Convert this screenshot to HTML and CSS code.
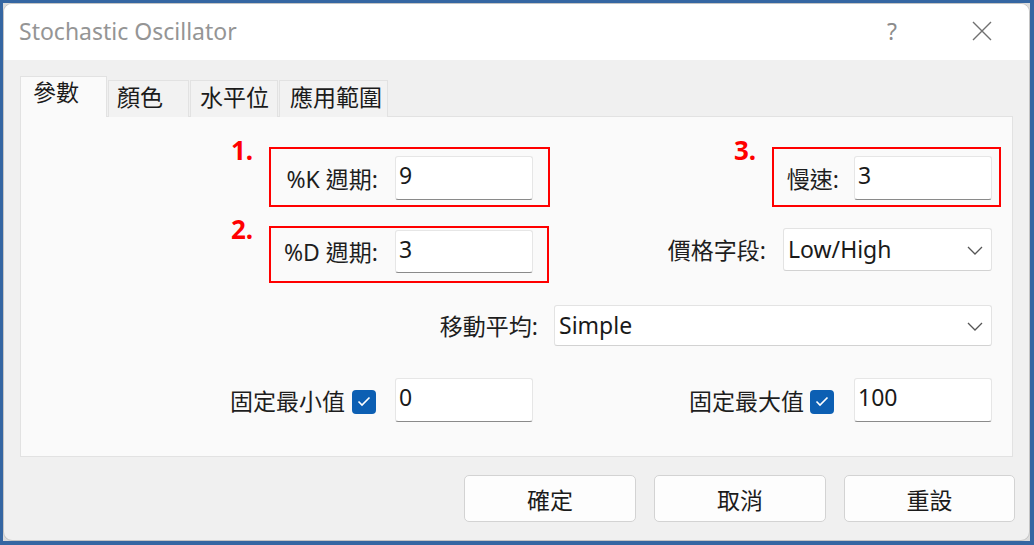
FILE: index.html
```html
<!DOCTYPE html>
<html lang="zh-Hant">
<head>
<meta charset="utf-8">
<title>Stochastic Oscillator</title>
<link rel="stylesheet" href="styles.css">
</head>
<body>
<div class="screen">
  <div class="dialog">
    <div class="titlebar">
      <span class="title">Stochastic Oscillator</span>
      <span class="help">?</span>
      <span class="close"><svg width="20" height="20" viewBox="0 0 20 20"><path d="M1 1 L19 19 M19 1 L1 19" stroke="#707070" stroke-width="1.4" fill="none"/></svg></span>
    </div>
    <div class="content">
      <div class="tabs">
        <div class="tab active t1">參數</div>
        <div class="tab t2">顏色</div>
        <div class="tab t3">水平位</div>
        <div class="tab t4">應用範圍</div>
      </div>
      <div class="panel">
        <div class="row row1">
          <div class="mark m1">
            <span class="num">1.</span>
            <span class="label">%K 週期:</span>
            <div class="input">9</div>
          </div>
          <div class="mark m3">
            <span class="num">3.</span>
            <span class="label">慢速:</span>
            <div class="input">3</div>
          </div>
        </div>
        <div class="row row2">
          <div class="mark m2">
            <span class="num">2.</span>
            <span class="label">%D 週期:</span>
            <div class="input">3</div>
          </div>
          <div class="group price">
            <span class="label">價格字段:</span>
            <div class="select sel-price"><span>Low/High</span><svg class="chev" width="16" height="9" viewBox="0 0 16 9"><path d="M1 1 L8 8 L15 1" stroke="#555" stroke-width="1.3" fill="none"/></svg></div>
          </div>
        </div>
        <div class="row row3">
          <span class="label">移動平均:</span>
          <div class="select sel-ma"><span>Simple</span><svg class="chev" width="16" height="9" viewBox="0 0 16 9"><path d="M1 1 L8 8 L15 1" stroke="#555" stroke-width="1.3" fill="none"/></svg></div>
        </div>
        <div class="row row4">
          <div class="group fix-min">
            <span class="label">固定最小值</span>
            <span class="check"><svg width="14" height="11" viewBox="0 0 14 11"><path d="M1.5 5.5 L5 9 L12.5 1.5" stroke="#fff" stroke-width="1.6" fill="none"/></svg></span>
            <div class="input">0</div>
          </div>
          <div class="group fix-max">
            <span class="label">固定最大值</span>
            <span class="check"><svg width="14" height="11" viewBox="0 0 14 11"><path d="M1.5 5.5 L5 9 L12.5 1.5" stroke="#fff" stroke-width="1.6" fill="none"/></svg></span>
            <div class="input">100</div>
          </div>
        </div>
      </div>
      <div class="buttons">
        <div class="btn">確定</div>
        <div class="btn">取消</div>
        <div class="btn">重設</div>
      </div>
    </div>
  </div>
</div>
</body>
</html>
```

FILE: styles.css
```css
* { box-sizing: border-box; }
html, body { margin: 0; padding: 0; }
body {
  width: 1034px;
  height: 545px;
  background: #3566a2;
  padding: 3px 4px 4px 3px;
  font-family: "Noto Sans", "Noto Sans CJK TC", sans-serif;
  font-size: 23px;
  color: #1b1b1b;
  overflow: hidden;
}
.screen {
  width: 100%;
  height: 100%;
  background: #dcdcdc;
}
.dialog {
  width: 100%;
  height: 100%;
  border: 1px solid #c4c4c4;
  border-radius: 9px;
  background: #f0f0f0;
  overflow: hidden;
  display: flex;
  flex-direction: column;
}
.titlebar {
  height: 56px;
  background: #ffffff;
  display: flex;
  align-items: center;
  padding-left: 15px;
  flex-shrink: 0;
}
.title {
  color: #959595;
  font-size: 23px;
  flex: 1;
  margin-top: -2px;
}
.help {
  color: #8c8c8c;
  font-size: 23px;
  margin-right: 75px;
  margin-top: -2px;
}
.close {
  display: flex;
  margin-right: 37px;
  margin-top: -2px;
}
.content {
  flex: 1;
  padding: 17px 16px 0 16px;
  display: flex;
  flex-direction: column;
}
.tabs {
  display: flex;
  align-items: flex-end;
  height: 40px;
  margin-bottom: -1px;
  position: relative;
  z-index: 1;
}
.tab {
  height: 37px;
  background: #f2f2f2;
  border: 1px solid #e2e2e2;
  border-bottom: none;
  line-height: 31px;
  padding-top: 1px;
  white-space: nowrap;
  margin-right: 1px;
}
.tab.active {
  height: 41px;
  background: #fafafa;
  padding-top: 0;
  line-height: 31px;
}
.t1 { width: 87px; padding-left: 12px; }
.t2 { width: 81px; padding-left: 8px; }
.t3 { width: 88px; padding-left: 9px; }
.t4 { width: 109px; padding-left: 10px; }
.panel {
  background: #fafafa;
  border: 1px solid #e2e2e2;
  padding: 30px 0 34px 0;
}
.row { display: flex; }
.row1 {
  height: 60px;
  padding: 0 11px 0 248px;
  justify-content: space-between;
}
.row2 {
  height: 57px;
  margin-top: 19px;
  padding: 0 11px 0 248px;
  justify-content: space-between;
}
.row3 {
  height: 41px;
  margin-top: 22px;
  padding-right: 20px;
  justify-content: flex-end;
  align-items: center;
}
.row4 {
  height: 44px;
  margin-top: 32px;
  padding-right: 20px;
  align-items: center;
}
.mark {
  position: relative;
  border: 2px solid #ff0000;
  display: flex;
  align-items: center;
  justify-content: flex-end;
}
.m1 { width: 281px; padding: 7px 15px 5px 0; }
.m2 { width: 280px; padding: 2px 14px 8px 0; }
.m3 { width: 229px; padding: 7px 7px 5px 0; }
.num {
  position: absolute;
  left: -40px;
  top: -14px;
  color: #ff0000;
  font-weight: bold;
  font-size: 26px;
  line-height: 30px;
}
.m1 .label, .m2 .label { margin-right: 17px; }
.m3 .label { margin-right: 15px; }
.label {
  white-space: nowrap;
  color: #1e1e1e;
  margin-top: -1px;
}
.input {
  width: 138px;
  height: 44px;
  background: #ffffff;
  border: 1px solid #e6e6e6;
  border-bottom: 1px solid #8a8a8a;
  border-radius: 3px;
  padding: 1px 0 0 3px;
  line-height: 34px;
  font-size: 23px;
  color: #1a1a1a;
}
.m2 .input { height: 43px; }
.group {
  display: flex;
  align-items: center;
}
.price {
  align-self: flex-start;
  margin-top: 2px;
  margin-right: 9px;
}
.price .label { margin-right: 17px; }
.select {
  height: 43px;
  background: #ffffff;
  border: 1px solid #e3e3e3;
  border-bottom-color: #d2d2d2;
  border-radius: 3px;
  display: flex;
  align-items: center;
  justify-content: space-between;
  padding: 0 8px 0 4px;
  color: #1a1a1a;
}
.select span { margin-top: -2px; }
.sel-price { width: 209px; }
.sel-ma { width: 438px; height: 41px; }
.row3 .label { margin-right: 16px; }
.chev { margin-top: 2px; }
.fix-min {
  width: 512px;
  justify-content: flex-end;
}
.fix-max {
  flex: 1;
  justify-content: flex-end;
}
.fix-min .label { margin-right: 7px; }
.fix-max .label { margin-right: 6px; }
.check {
  width: 24px;
  height: 24px;
  border-radius: 4px;
  background: #0c5fb3;
  display: flex;
  align-items: center;
  justify-content: center;
  margin-top: 3px;
}
.fix-min .check { margin-right: 19px; }
.fix-max .check { margin-right: 20px; }
.buttons {
  display: flex;
  justify-content: flex-end;
  gap: 18px;
  margin-top: 18px;
  margin-right: -2px;
}
.btn {
  width: 172px;
  height: 47px;
  background: #fdfdfd;
  border: 1px solid #d3d3d3;
  border-radius: 5px;
  display: flex;
  align-items: center;
  justify-content: center;
  color: #1b1b1b;
}
.btn:last-child { width: 171px; }
```
